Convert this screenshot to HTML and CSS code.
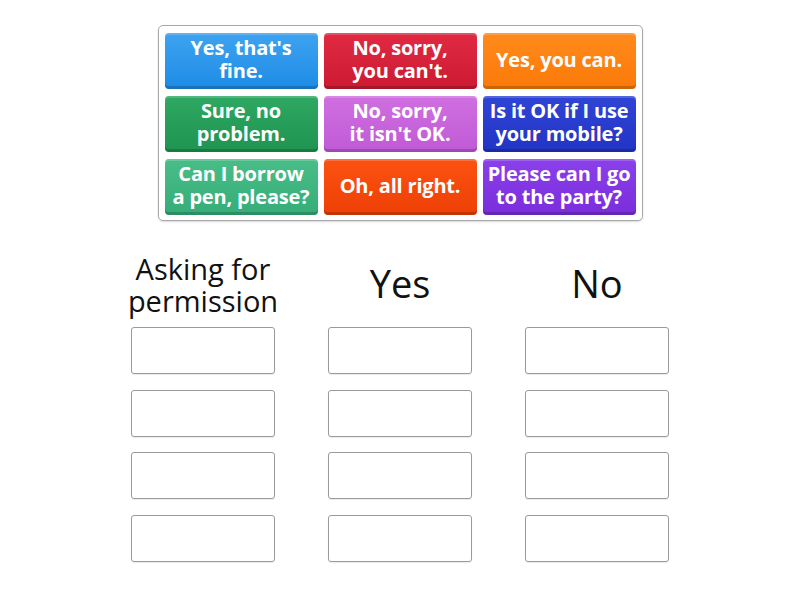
FILE: index.html
```html
<!DOCTYPE html>
<html>
<head>
<meta charset="utf-8">
<link rel="stylesheet" href="styles.css">
</head>
<body>
<div class="tray">
  <div class="tile blue">Yes, that's<br>fine.</div>
  <div class="tile red">No, sorry,<br>you can't.</div>
  <div class="tile orange">Yes, you can.</div>
  <div class="tile green">Sure, no<br>problem.</div>
  <div class="tile pink">No, sorry,<br>it isn't OK.</div>
  <div class="tile navy">Is it OK if I use<br>your mobile?</div>
  <div class="tile teal">Can I borrow<br>a pen, please?</div>
  <div class="tile flame">Oh, all right.</div>
  <div class="tile violet">Please can I go<br>to the party?</div>
</div>
<div class="board">
  <div class="col">
    <div class="head small">Asking for<br>permission</div>
    <div class="slot"></div><div class="slot"></div><div class="slot"></div><div class="slot"></div>
  </div>
  <div class="col">
    <div class="head">Yes</div>
    <div class="slot"></div><div class="slot"></div><div class="slot"></div><div class="slot"></div>
  </div>
  <div class="col">
    <div class="head">No</div>
    <div class="slot"></div><div class="slot"></div><div class="slot"></div><div class="slot"></div>
  </div>
</div>
</body>
</html>
```
FILE: styles.css
```css
html, body {
  margin: 0;
  padding: 0;
  background: #fff;
  font-family: "Open Sans", "DejaVu Sans", sans-serif;
}
.tray {
  width: 471px;
  margin: 25px auto 0;
  padding: 7px 6px 5px 6px;
  border: 1px solid #a8a8a8;
  border-radius: 5px;
  display: grid;
  grid-template-columns: repeat(3, 153px);
  grid-template-rows: repeat(3, 56px);
  column-gap: 6px;
  row-gap: 7px;
  box-shadow: 0 1px 2px rgba(0,0,0,0.15);
}
.tile {
  border-radius: 4px;
  color: #fff;
  font-weight: 700;
  font-size: 20px;
  line-height: 23px;
  letter-spacing: -0.2px;
  text-align: center;
  display: flex;
  align-items: center;
  justify-content: center;
  padding: 0 2px 4px;
  box-sizing: border-box;
  white-space: nowrap;
  box-shadow: inset 0 -3px 0 rgba(0,0,0,0.18), inset 0 2px 0 rgba(255,255,255,0.18);
}
.blue { background: linear-gradient(#3ea3f0, #1d8ce6); }
.red { background: linear-gradient(#e02a42, #cc1a32); }
.orange { background: linear-gradient(#ff8a1c, #fb7a08); }
.green { background: linear-gradient(#2ea862, #1e9450); }
.pink { background: linear-gradient(#cf6fe0, #c05ad6); }
.navy { background: linear-gradient(#2f45d6, #2234c4); }
.teal { background: linear-gradient(#48bd88, #36ad78); }
.flame { background: linear-gradient(#fb5210, #ee4006); }
.violet { background: linear-gradient(#8a40ea, #7a2ddc); }

.board {
  width: 591px;
  margin: 29px auto 0;
  display: flex;
}
.col {
  width: 197px;
  display: flex;
  flex-direction: column;
  align-items: center;
}
.head {
  height: 68px;
  margin-bottom: 9px;
  display: flex;
  align-items: center;
  justify-content: center;
  text-align: center;
  font-size: 38px;
  line-height: 42px;
  color: #111;
  padding-bottom: 2px;
  box-sizing: border-box;
  white-space: nowrap;
}
.head.small {
  font-size: 29px;
  line-height: 32px;
  padding-bottom: 0;
  padding-top: 2px;
}
.slot {
  width: 144px;
  height: 47px;
  box-sizing: border-box;
  border: 1px solid #9a9a9a;
  border-radius: 3px;
  margin-bottom: 15.67px;
  box-shadow: 0 1px 1px rgba(0,0,0,0.08);
}
```
